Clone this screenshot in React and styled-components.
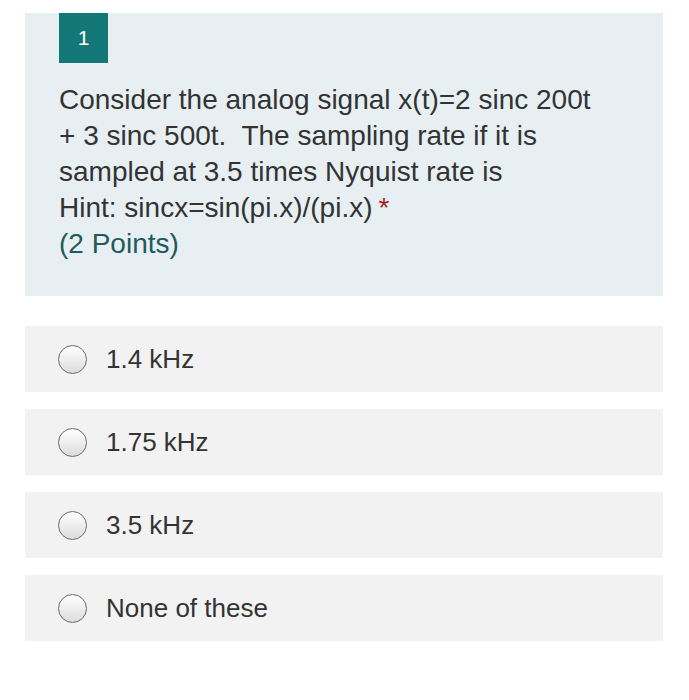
import React from 'react'
import styled, { createGlobalStyle } from 'styled-components'

const GlobalStyle = createGlobalStyle`
  body {
    margin: 0;
    background: #ffffff;
    font-family: "Liberation Sans", Arial, sans-serif;
  }
`

const Page = styled.main`
  width: 689px;
  padding: 13px 26px 0 25px;
  box-sizing: border-box;
`

const QuestionPanel = styled.section`
  background: #e7eff2;
  padding: 0 20px 40px 34px;
  height: 283px;
  box-sizing: border-box;
`

const Badge = styled.div`
  width: 49px;
  height: 50px;
  background: #137777;
  color: #ffffff;
  font-size: 21px;
  display: flex;
  align-items: center;
  justify-content: center;
`

const QuestionText = styled.div`
  margin-top: 19px;
  font-size: 28px;
  line-height: 36px;
  color: #333333;
`

const Required = styled.span`
  color: #a4262c;
  margin-left: 6px;
`

const Points = styled.div`
  color: #1f5b5b;
`

const Options = styled.div`
  margin-top: 30px;
  display: flex;
  flex-direction: column;
  gap: 17px;
`

const Option = styled.label`
  height: 66px;
  background: #f2f2f2;
  display: flex;
  align-items: center;
  padding-left: 33px;
  gap: 19px;
  font-size: 26px;
  color: #333333;
`

const Radio = styled.span`
  width: 29px;
  height: 29px;
  border-radius: 50%;
  border: 1.5px solid #6b6b6b;
  background: linear-gradient(#ffffff, #dcdcdc);
  box-sizing: border-box;
  flex-shrink: 0;
`

const answers = ['1.4 kHz', '1.75 kHz', '3.5 kHz', 'None of these']

export default function App() {
  return (
    <>
      <GlobalStyle />
      <Page>
        <QuestionPanel>
          <Badge>1</Badge>
          <QuestionText>
            Consider the analog signal x(t)=2 sinc 200t<br />
            + 3 sinc 500t.&nbsp; The sampling rate if it is<br />
            sampled at 3.5 times Nyquist rate is<br />
            Hint: sincx=sin(pi.x)/(pi.x)<Required>*</Required>
            <Points>(2 Points)</Points>
          </QuestionText>
        </QuestionPanel>
        <Options>
          {answers.map((a) => (
            <Option key={a}>
              <Radio />
              {a}
            </Option>
          ))}
        </Options>
      </Page>
    </>
  )
}
